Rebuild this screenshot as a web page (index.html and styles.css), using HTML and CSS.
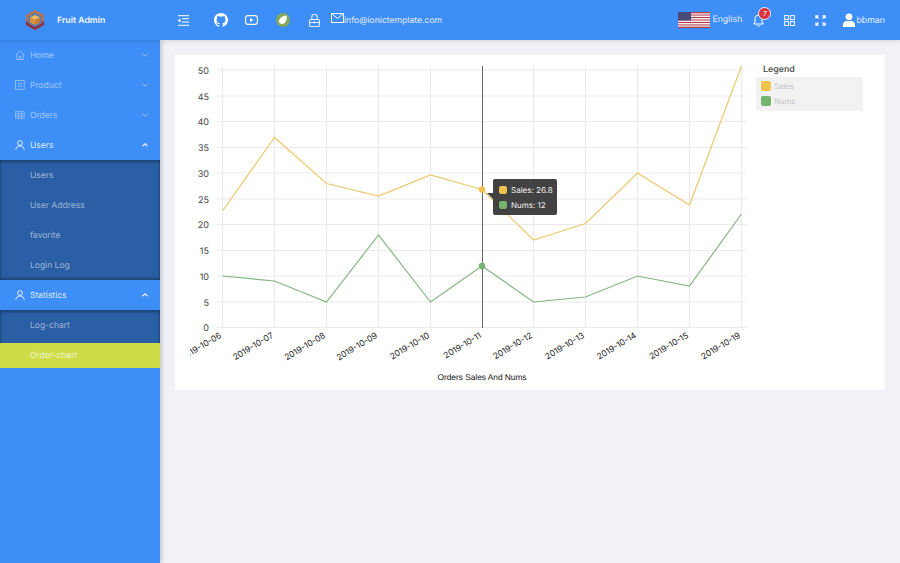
FILE: index.html
```html
<!DOCTYPE html>
<html lang="en">
<head>
<meta charset="utf-8">
<title>Fruit Admin</title>
<link rel="stylesheet" href="styles.css">
</head>
<body>
<header class="topbar">
  <div class="brand">
    <svg class="logo" width="20" height="20" viewBox="0 0 20 20"><polygon points="10,0 19,5 19,15 10,20 1,15 1,5" fill="#b8704f"/><polygon points="1,15 10,20 19,15 19,11 10,16 1,11" fill="#8d2f45"/><polygon points="3.500,6.500 10,3 16.500,6.500 16.500,13.500 10,17 3.500,13.500" fill="#4f7fb5"/><polygon points="10,5 15,7.500 10,10 5,7.500" fill="#f5b85a"/><polygon points="5,7.500 10,10 10,15 5,12.500" fill="#e0913f"/><polygon points="15,7.500 10,10 10,15 15,12.500" fill="#cf7a35"/></svg>
    <span class="brand-name">Fruit Admin</span>
  </div>
  <div class="tools">
    <svg class="tool-menu" width="12" height="11" viewBox="0 0 12 11"><path d="M1 .7h11M5 3.700h7M5 7h7M1 10.300h11" stroke="#fff" fill="none"/><path d="M3.500 3.500v4L.5 5.500z" fill="#fff"/></svg>
    <svg class="tool-gh" width="14" height="14" viewBox="0 0 16 16"><path fill="#fff" d="M8 0C3.580 0 0 3.580 0 8c0 3.540 2.290 6.530 5.470 7.590.4.070.55-.17.55-.38 0-.19-.01-.82-.01-1.490-2.010.37-2.530-.49-2.690-.94-.09-.23-.48-.94-.82-1.130-.28-.15-.68-.52-.01-.53.63-.01 1.080.58 1.230.82.720 1.210 1.870.870 2.330.660.070-.520.280-.870.510-1.070-1.780-.2-3.640-.89-3.640-3.950 0-.870.310-1.590.820-2.150-.08-.2-.36-1.020.08-2.120 0 0 .670-.210 2.200.820.640-.180 1.320-.270 2-.270s1.360.090 2 .270c1.530-1.040 2.200-.820 2.200-.820.440 1.100.160 1.920.080 2.120.510.560.820 1.270.820 2.150 0 3.070-1.870 3.750-3.650 3.950.290.250.540.730.540 1.480 0 1.070-.010 1.930-.010 2.200 0 .210.150.460.550.380A8.010 8.010 0 0 0 16 8c0-4.420-3.580-8-8-8z"/></svg>
    <svg class="tool-yt" width="13" height="10" viewBox="0 0 13 10"><rect x=".6" y=".6" width="11.800" height="8.800" rx="2.400" fill="none" stroke="#fff" stroke-width="1.100"/><path d="M5 3l3.500 2L5 7z" fill="#fff"/></svg>
    <svg class="tool-leaf" width="14" height="14" viewBox="0 0 14 14"><circle cx="7" cy="7" r="7" fill="#86a958"/><path d="M3 8.500C3 5.500 6 3 10.500 2.600c.8 4.400-1 8.400-4.500 8.400-1.800 0-3-1-3-2.500z" fill="#fff"/></svg>
    <svg class="tool-lock" width="11" height="13" viewBox="0 0 11 13"><rect x=".6" y="5.500" width="9.800" height="7" rx="1" fill="none" stroke="#e6efff" stroke-width="1.100"/><path d="M2.800 5.500V3a2.700 2.700 0 0 1 5.400 0v2.500" fill="none" stroke="#e6efff" stroke-width="1.100"/><path d="M.6 8.500h9.800" stroke="#e6efff"/><circle cx="5.500" cy="8.500" r="1.100" fill="#e6efff"/></svg>
    <span class="mail">
      <svg width="13" height="10" viewBox="0 0 13 10"><rect x=".5" y=".5" width="12" height="9" fill="none" stroke="#fff"/><path d="M.5.500l6 5 6-5" fill="none" stroke="#fff"/></svg>
      <span class="mail-text">info@ionictemplate.com</span>
    </span>
  </div>
  <div class="tools-right">
    <span class="lang">
      <svg width="32" height="16" viewBox="0 0 32 16"><rect width="32" height="16" fill="#f4f0f0"/><path d="M0 .6h32M0 3h32M0 5.500h32M0 8h32M0 10.500h32M0 13h32M0 15.400h32" stroke="#b5384a" stroke-width="1.200"/><rect width="13" height="8.500" fill="#4a4a78"/></svg>
      <span class="lang-text">English</span>
    </span>
    <span class="bell">
      <svg width="11" height="13" viewBox="0 0 11 13"><path d="M5.500 1A3.500 3.500 0 0 0 2 4.500V8L.7 10h9.600L9 8V4.500A3.500 3.500 0 0 0 5.500 1z" fill="none" stroke="#fff"/><path d="M4 11.300a1.600 1.600 0 0 0 3 0" fill="none" stroke="#fff"/></svg>
      <span class="badge">7</span>
    </span>
    <svg class="tool-apps" width="11" height="11" viewBox="0 0 11 11"><g fill="none" stroke="#e6efff" stroke-width="1.100"><rect x=".5" y=".5" width="4" height="4"/><rect x="6.500" y=".5" width="4" height="4"/><rect x=".5" y="6.500" width="4" height="4"/><rect x="6.500" y="6.500" width="4" height="4"/></g></svg>
    <svg class="tool-full" width="11" height="11" viewBox="0 0 11 11"><path d="M.5.500l3 3M3.500.9L.9.900v2.600M10.500.5l-3 3M7.500.9h2.600v2.600M.5 10.500l3-3M.9 7.500v2.600h2.600M10.500 10.500l-3-3M10.100 7.500v2.600H7.500" fill="none" stroke="#fff" stroke-width="1.200"/></svg>
    <span class="user">
      <svg width="12" height="14" viewBox="0 0 12 14"><circle cx="6" cy="3.800" r="3.400" fill="#fff"/><path d="M0 14v-2.500C0 9.300 2 8 4 8h4c2 0 4 1.300 4 3.500V14z" fill="#fff"/></svg>
      <span>bbman</span>
    </span>
  </div>
</header>

<div class="body">
  <nav class="sidebar">
    <a class="item">
      <svg class="ico" width="10" height="10" viewBox="0 0 10 10"><path d="M.5 5L5 .8 9.500 5M1.700 4.200v5.300h6.600V4.200M4 9.500V6.500h2v3" fill="none" stroke="currentColor" stroke-width=".8"/></svg>
      <span class="label">Home</span>
      <svg class="chev" width="6" height="4" viewBox="0 0 6 4"><path d="M.5.800L3 3.200 5.500.8" fill="none" stroke="currentColor"/></svg>
    </a>
    <a class="item">
      <svg class="ico" width="10" height="10" viewBox="0 0 10 10"><rect x=".4" y=".4" width="8.800" height="8.800" fill="none" stroke="currentColor" stroke-width=".8"/><path d="M3.500 3h3v3.500h-3z" fill="none" stroke="currentColor" stroke-width=".6"/></svg>
      <span class="label">Product</span>
      <svg class="chev" width="6" height="4" viewBox="0 0 6 4"><path d="M.5.800L3 3.200 5.500.8" fill="none" stroke="currentColor"/></svg>
    </a>
    <a class="item">
      <svg class="ico" width="10" height="8" viewBox="0 0 10 8"><path d="M.4.400h8.800v7.200H.4zM3.300.4v7.200M6.300.4v7.200M.4 2.800h8.800M.4 5.200h8.800" fill="none" stroke="currentColor" stroke-width=".7"/></svg>
      <span class="label">Orders</span>
      <svg class="chev" width="6" height="4" viewBox="0 0 6 4"><path d="M.5.800L3 3.200 5.500.8" fill="none" stroke="currentColor"/></svg>
    </a>
    <a class="item open">
      <svg class="ico" width="10" height="10" viewBox="0 0 10 10"><circle cx="5" cy="3" r="2.400" fill="none" stroke="currentColor"/><path d="M.8 9.800C1 7.500 2.500 6 5 6s4 1.500 4.200 3.800" fill="none" stroke="currentColor"/></svg>
      <span class="label">Users</span>
      <svg class="chev" width="6" height="4" viewBox="0 0 6 4"><path d="M.5 3.200L3 .8l2.500 2.400" fill="none" stroke="currentColor" stroke-width="1.300"/></svg>
    </a>
    <div class="sub">
      <a class="sub-item">Users</a>
      <a class="sub-item">User Address</a>
      <a class="sub-item">favorite</a>
      <a class="sub-item">Login Log</a>
    </div>
    <a class="item open">
      <svg class="ico" width="10" height="10" viewBox="0 0 10 10"><circle cx="5" cy="3" r="2.400" fill="none" stroke="currentColor"/><path d="M.8 9.800C1 7.500 2.500 6 5 6s4 1.500 4.200 3.800" fill="none" stroke="currentColor"/></svg>
      <span class="label">Statistics</span>
      <svg class="chev" width="6" height="4" viewBox="0 0 6 4"><path d="M.5 3.200L3 .8l2.500 2.400" fill="none" stroke="currentColor" stroke-width="1.300"/></svg>
    </a>
    <div class="sub">
      <a class="sub-item">Log-chart</a>
      <a class="sub-item active">Order-chart</a>
    </div>
  </nav>

  <main class="content">
    <section class="card">
      <svg class="chart" width="581" height="335" viewBox="175 55 581 335">
        <defs><clipPath id="tick-clip"><rect x="190" y="328" width="566" height="40"/></clipPath></defs>
        <g class="grid">
          <path d="M217 70h529M217 96h529M217 121.500h529M217 147.500h529M217 173h529M217 199h529M217 224.500h529M217 250.500h529M217 276h529M217 302h529M217 327.500h529"/>
          <path d="M222.500 66v262M274.500 66v262M326.500 66v262M378.500 66v262M430.500 66v262M533.500 66v262M585.500 66v262M637.500 66v262M689.500 66v262M741.500 66v262"/>
        </g>
        <g class="yticks">
          <text x="209" y="73.500">50</text>
          <text x="209" y="99.500">45</text>
          <text x="209" y="125">40</text>
          <text x="209" y="151">35</text>
          <text x="209" y="176.500">30</text>
          <text x="209" y="202.500">25</text>
          <text x="209" y="228">20</text>
          <text x="209" y="254">15</text>
          <text x="209" y="279.500">10</text>
          <text x="209" y="305.500">5</text>
          <text x="209" y="331">0</text>
        </g>
        <polyline class="sales" points="222.500,211 274.500,137.500 326.500,183.500 378.500,196 430.500,175 482,189.500 533.500,240 585.500,223.500 637.500,173 689.500,205 741.500,66"/>
        <polyline class="nums" points="222.500,276 274.500,281 326.500,302 378.500,235 430.500,302 482,266 533.500,302 585.500,297 637.500,276 689.500,286 741.500,214"/>
        <path class="pointer" d="M482.500 66v262"/>
        <circle cx="482" cy="189.500" r="3.200" fill="#f0c24e"/>
        <circle cx="482" cy="266" r="3.200" fill="#74b46e"/>
        <g clip-path="url(#tick-clip)" class="xticks">
          <text transform="translate(222 337) rotate(-31)">2019-10-06</text>
          <text transform="translate(274 337) rotate(-31)">2019-10-07</text>
          <text transform="translate(326 337) rotate(-31)">2019-10-08</text>
          <text transform="translate(378 337) rotate(-31)">2019-10-09</text>
          <text transform="translate(430 337) rotate(-31)">2019-10-10</text>
          <text transform="translate(482 337) rotate(-31)">2019-10-11</text>
          <text transform="translate(533 337) rotate(-31)">2019-10-12</text>
          <text transform="translate(585 337) rotate(-31)">2019-10-13</text>
          <text transform="translate(637 337) rotate(-31)">2019-10-14</text>
          <text transform="translate(689 337) rotate(-31)">2019-10-15</text>
          <text transform="translate(741 337) rotate(-31)">2019-10-19</text>
        </g>
        <text class="axis-title" x="482" y="379.500">Orders Sales And Nums</text>
      </svg>
      <aside class="legend">
        <div class="legend-title">Legend</div>
        <div class="legend-box">
          <div class="legend-row"><i class="swatch swatch-sales"></i>Sales</div>
          <div class="legend-row"><i class="swatch swatch-nums"></i>Nums</div>
        </div>
      </aside>
      <div class="tooltip">
        <div class="tip-row"><i class="swatch swatch-sales"></i>Sales: 26.8</div>
        <div class="tip-row"><i class="swatch swatch-nums"></i>Nums: 12</div>
      </div>
    </section>
  </main>
</div>
</body>
</html>
```

FILE: styles.css
```css
* { box-sizing: border-box; }
html, body { margin: 0; height: 100%; }
body {
  width: 900px;
  height: 563px;
  overflow: hidden;
  display: flex;
  flex-direction: column;
  font-family: Inter, "Noto Sans", sans-serif;
  background: #f0f2f7;
  text-rendering: geometricPrecision;
}
.topbar {
  height: 40px;
  flex: none;
  background: #3e8ef7;
  color: #fff;
  display: flex;
  align-items: center;
  box-shadow: 0 1px 6px rgba(0, 0, 0, .12);
  position: relative;
  z-index: 2;
}
.brand {
  width: 160px;
  flex: none;
  display: flex;
  align-items: center;
  padding-left: 25px;
}
.brand-name {
  margin-left: 12px;
  margin-top: 1px;
  font-size: 8.700px;
  font-weight: 600;
  color: #f2f7ff;
}
.tools { display: flex; align-items: center; padding-left: 17px; }
.tool-gh { margin-left: 25px; }
.tool-yt { margin-left: 17px; }
.tool-leaf { margin-left: 18px; }
.tool-lock { margin-left: 19px; }
.mail {
  margin-left: 11px;
  display: flex;
  align-items: center;
  font-size: 8.600px;
  color: #e0ecff;
}
.mail svg { margin-top: -4px; }
.mail-text { margin-top: 2px; }
.tools-right {
  margin-left: auto;
  display: flex;
  align-items: center;
  padding-right: 15px;
}
.lang { display: flex; align-items: center; font-size: 8.800px; color: #e0ecff; }
.lang-text { margin-left: 2px; margin-top: -2px; }
.bell { position: relative; display: flex; margin-left: 11px; }
.badge {
  position: absolute;
  left: 5px;
  top: -7px;
  width: 13px;
  height: 13px;
  border-radius: 50%;
  background: #d9333f;
  border: 1px solid #e9eef8;
  color: #fff;
  font-size: 7px;
  display: flex;
  align-items: center;
  justify-content: center;
}
.tool-apps { margin-left: 20px; }
.tool-full { margin-left: 20px; }
.user {
  margin-left: 17px;
  display: flex;
  align-items: center;
  gap: 1px;
  font-size: 8.800px;
  color: #e6efff;
}
.body { flex: 1; display: flex; min-height: 0; }
.sidebar {
  width: 160px;
  flex: none;
  background: #3e8ef7;
  box-shadow: 1px 0 5px rgba(0, 0, 0, .25);
  position: relative;
  z-index: 1;
}
.item {
  height: 30px;
  display: flex;
  align-items: center;
  padding: 0 12px 0 15px;
  font-size: 8.500px;
  color: rgba(255, 255, 255, .5);
}
.item.open { color: rgba(255, 255, 255, .85); }
.ico { width: 10px; flex: none; }
.label { margin-left: 5px; flex: 1; padding-top: 1px; }
.sub {
  background: #2a5ea5;
  box-shadow: inset 0 2px 3px rgba(0, 0, 0, .3), inset 0 -2px 3px rgba(0, 0, 0, .25);
}
.sub-item {
  height: 30px;
  display: flex;
  align-items: center;
  padding: 1px 0 0 30px;
  font-size: 8.500px;
  color: rgba(255, 255, 255, .55);
}
.sub-item.active {
  background: #cddc47;
  height: 25px;
  margin-top: 3px;
  margin-bottom: 2px;
  color: rgba(255, 255, 255, .75);
}
.content { flex: 1; padding: 15px; min-width: 0; }
.card {
  height: 335px;
  background: #fff;
  display: flex;
  position: relative;
}
.chart { display: block; flex: none; }
.grid path { stroke: #ebebeb; fill: none; stroke-width: 1.200; }
.yticks text { font: 9px Inter, sans-serif; fill: #444; text-anchor: end; }
.xticks text { font: 8.400px Inter, sans-serif; fill: #222; text-anchor: end; }
.axis-title { font: 8.300px "Liberation Sans", sans-serif; fill: #111; text-anchor: middle; }
.sales, .nums { fill: none; stroke-width: 1.200; }
.sales { stroke: #edc96f; }
.nums { stroke: #83b680; }
.pointer { stroke: #666; stroke-width: 1; fill: none; }
.legend { padding-top: 8px; }
.legend-title {
  padding-left: 7px;
  padding-top: 1px;
  font-size: 8.800px;
  font-weight: 600;
  line-height: 11px;
  color: #555;
}
.legend-box {
  margin-top: 2px;
  width: 107px;
  height: 34px;
  padding: 1px 5px 0;
  background: #f2f2f2;
  border-radius: 1px;
}
.legend-row {
  height: 15px;
  display: flex;
  align-items: center;
  gap: 3px;
  font-size: 7.800px;
  color: #c3c3c8;
}
.swatch {
  width: 10px;
  height: 10px;
  border-radius: 2px;
  flex: none;
}
.swatch-sales { background: #f0c24e; }
.swatch-nums { background: #74b46e; }
.tooltip {
  position: absolute;
  left: 318px;
  top: 124px;
  width: 64px;
  height: 36px;
  padding: 3px 0 0 6px;
  background: rgba(50, 50, 50, .92);
  border-radius: 2px;
  color: #f2f2f2;
  font-size: 8px;
}
.tooltip::before {
  content: "";
  position: absolute;
  left: -6px;
  top: 14px;
  border: 3.500px solid transparent;
  border-right: 3px solid rgba(50, 50, 50, .92);
  border-top: 3.500px solid rgba(50, 50, 50, .92);
}
.tip-row {
  height: 15px;
  display: flex;
  align-items: center;
  gap: 4px;
}
.tip-row .swatch { width: 8px; height: 8px; }
```
